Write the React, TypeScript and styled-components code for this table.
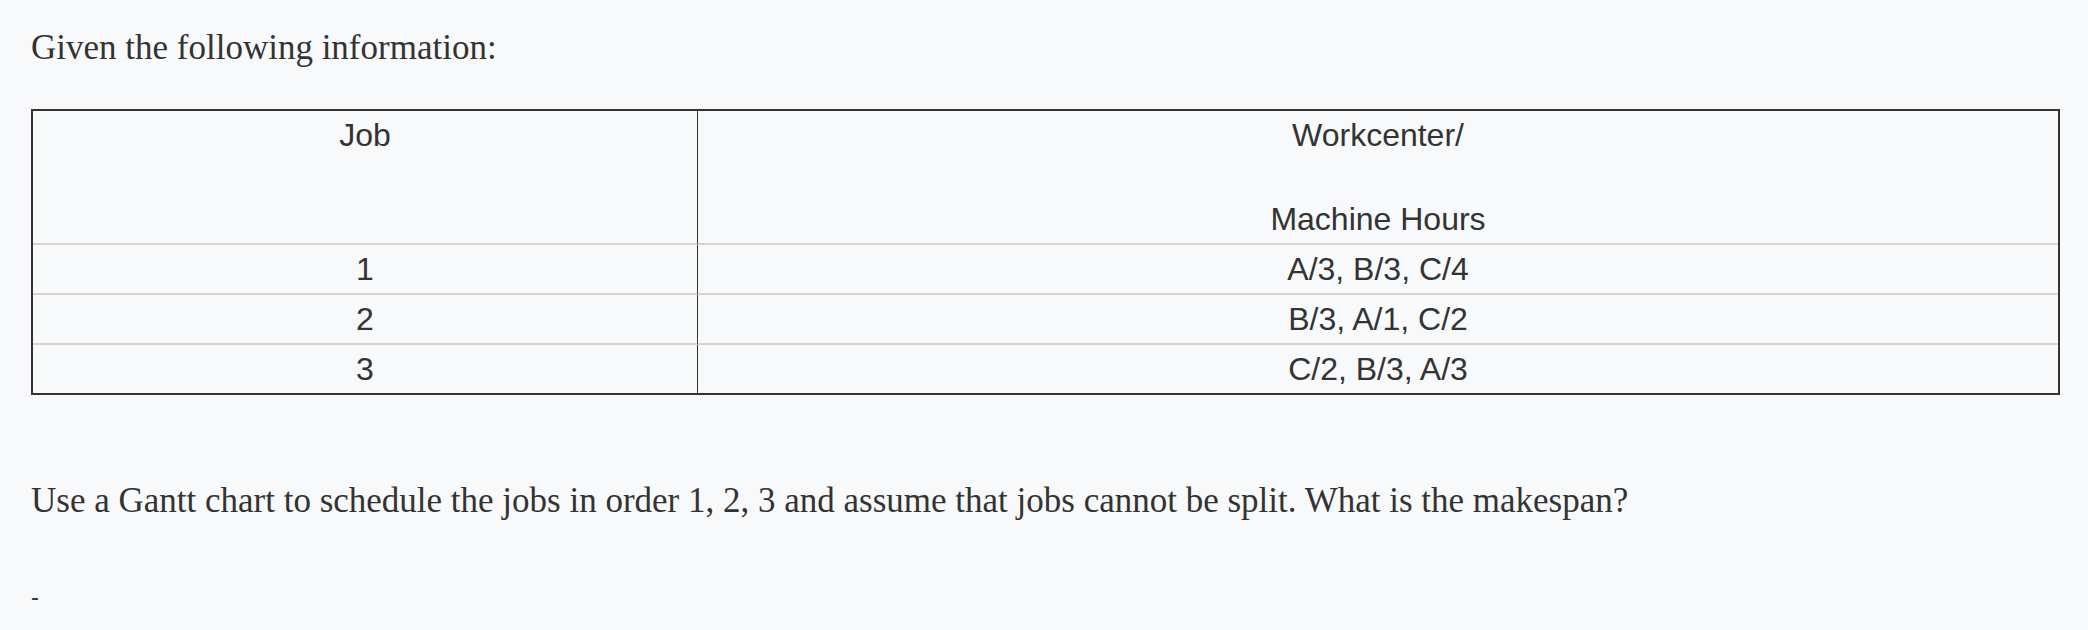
import React from "react";
import styled, { createGlobalStyle } from "styled-components";

const GlobalStyle = createGlobalStyle`
  html, body {
    margin: 0;
    padding: 0;
    background: #f8f9fa;
  }
`;

const Page = styled.div`
  padding: 0 28px 0 31px;
  color: #333;
`;

const Para = styled.p<{ $top: number }>`
  margin: ${(p) => p.$top}px 0 0 0;
  font-family: "Liberation Serif", Georgia, serif;
  font-size: 35px;
  line-height: 48px;
  font-variant-numeric: oldstyle-nums;
`;

const Dash = styled.p`
  margin: 48px 0 0 0;
  font-family: "Liberation Sans", Arial, sans-serif;
  font-size: 24px;
  line-height: 48px;
`;

const Table = styled.table`
  margin-top: 37px;
  width: 2029px;
  border: 2px solid #333;
  border-collapse: separate;
  border-spacing: 0;
  font-family: "Liberation Sans", Arial, sans-serif;
  font-size: 32px;
  line-height: 42px;
  color: #333;
`;

const Cell = styled.td<{ $first?: boolean; $last?: boolean }>`
  padding: 3px 0;
  text-align: center;
  vertical-align: top;
  width: ${(p) => (p.$first ? "665px" : "auto")};
  box-sizing: border-box;
  border-right: ${(p) => (p.$first ? "1px solid #333" : "none")};
  border-bottom: ${(p) => (p.$last ? "none" : "2px solid #d4d4d4")};
`;

const rows = [
  ["1", "A/3, B/3, C/4"],
  ["2", "B/3, A/1, C/2"],
  ["3", "C/2, B/3, A/3"],
];

const App = () => {
  return (
    <Page>
      <GlobalStyle />
      <Para $top={24}>Given the following information:</Para>
      <Table>
        <tbody>
          <tr>
            <Cell $first>Job</Cell>
            <Cell>
              Workcenter/
              <br />
              <br />
              Machine Hours
            </Cell>
          </tr>
          {rows.map((r, i) => (
            <tr key={r[0]}>
              <Cell $first $last={i === rows.length - 1}>
                {r[0]}
              </Cell>
              <Cell $last={i === rows.length - 1}>{r[1]}</Cell>
            </tr>
          ))}
        </tbody>
      </Table>
      <Para $top={82}>
        Use a Gantt chart to schedule the jobs in order 1, 2, 3 and assume that jobs cannot be split. What is
        the makespan?
      </Para>
      <Dash>-</Dash>
    </Page>
  );
};

export default App;
